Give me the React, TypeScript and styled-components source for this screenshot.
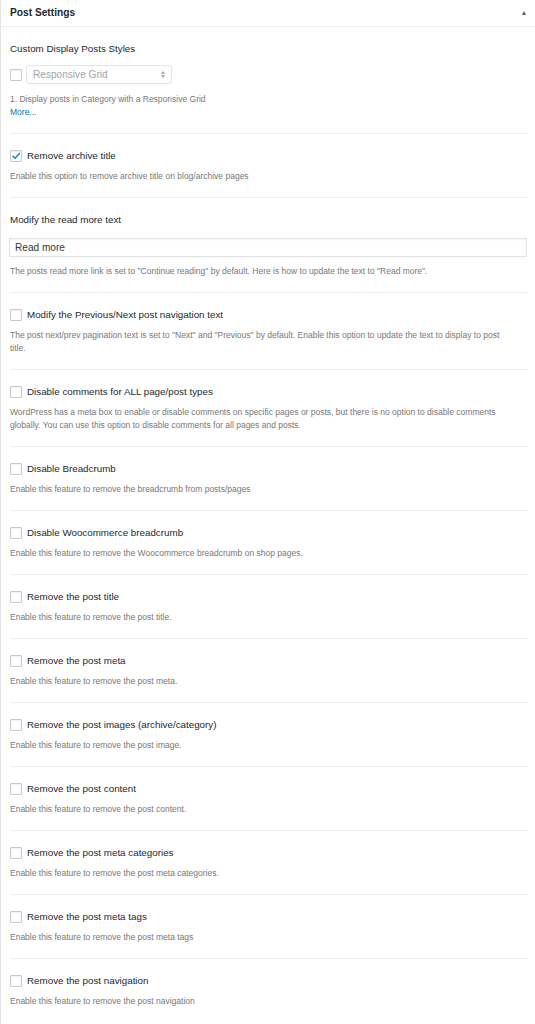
import { FC } from 'react';
import styled, { createGlobalStyle } from 'styled-components';

const GlobalStyle = createGlobalStyle`
  html, body {
    margin: 0;
    padding: 0;
    background: #fff;
  }
  body {
    font-family: "Liberation Sans", Arial, sans-serif;
    color: #23282d;
  }
`;

const Box = styled.div`
  border-left: 1px solid #e5e5e5;
  background: #fff;
  min-height: 1024px;
`;

const Header = styled.div`
  display: flex;
  align-items: center;
  justify-content: space-between;
  height: 26px;
  padding: 0 9px 0 9px;
  border-bottom: 1px solid #eee;
`;

const HeaderTitle = styled.h2`
  margin: 0;
  font-size: 10.2px;
  font-weight: 700;
  line-height: 26px;
  color: #23282d;
`;

const Toggle = styled.span`
  width: 0;
  height: 0;
  margin-top: -1px;
  border-left: 2.5px solid transparent;
  border-right: 2.5px solid transparent;
  border-bottom: 4px solid #555d66;
`;

const Section = styled.div`
  margin: 0 8px 0 9px;
  padding: 14px 0 14px;
  border-bottom: 1px solid #eee;

  &:last-child {
    border-bottom: none;
  }
`;

const Label = styled.label`
  display: flex;
  align-items: center;
  gap: 5px;
  font-size: 9.8px;
  line-height: 16px;
  color: #23282d;
`;

const Checkbox = styled.span`
  position: relative;
  flex: none;
  box-sizing: border-box;
  width: 12px;
  height: 12px;
  border: 1px solid #c8cbce;
  border-radius: 1px;
  background: #fff;
  box-shadow: inset 0 1px 1px rgba(0, 0, 0, 0.06);
`;

const Check = styled.svg`
  position: absolute;
  left: 0;
  top: 0;
  width: 10px;
  height: 10px;
`;

const Controls = styled.div`
  display: flex;
  align-items: center;
  gap: 4px;
  margin-top: 8px;
`;

const Select = styled.div`
  position: relative;
  box-sizing: border-box;
  width: 146px;
  height: 19px;
  padding: 0 0 0 6px;
  border: 1px solid #e2e4e7;
  border-radius: 3px;
  font-size: 10.1px;
  line-height: 17px;
  color: #a0a5aa;
  background: #fff;
`;

const Arrows = styled.span`
  position: absolute;
  right: 6px;
  top: 5px;
  display: flex;
  flex-direction: column;
  gap: 1px;

  &::before,
  &::after {
    content: '';
    width: 0;
    height: 0;
    border-left: 2px solid transparent;
    border-right: 2px solid transparent;
  }
  &::before {
    border-bottom: 3px solid #a0a5aa;
  }
  &::after {
    border-top: 3px solid #a0a5aa;
  }
`;

const TextInput = styled.div`
  box-sizing: border-box;
  height: 19px;
  margin: 10px 0 0 -1px;
  padding: 0 5px;
  border: 1px solid #dfe1e4;
  box-shadow: inset 0 1px 2px rgba(0, 0, 0, 0.04);
  font-size: 10.1px;
  line-height: 17px;
  color: #32373c;
`;

const Description = styled.p<{ $gap?: number }>`
  max-width: 500px;
  margin: ${({ $gap }) => $gap ?? 6}px 0 0;
  font-size: 8.5px;
  line-height: 13px;
  color: #777;
`;

const MoreLink = styled.a`
  display: block;
  font-size: 8.5px;
  line-height: 13px;
  color: #0073aa;
  text-decoration: none;
`;

interface OptionProps {
  readonly label: string;
  readonly description: string;
  readonly checked?: boolean;
}

const CheckMark: FC = () => (
  <Check viewBox="0 0 10 10">
    <path
      d="M2 5.2 L4.1 7.3 L8.3 2.4"
      fill="none"
      stroke="#1e8cbe"
      strokeWidth="1.6"
      strokeLinecap="round"
      strokeLinejoin="round"
    />
  </Check>
);

const Option: FC<OptionProps> = ({ label, description, checked }) => (
  <Section>
    <Label>
      <Checkbox>{checked && <CheckMark />}</Checkbox>
      {label}
    </Label>
    <Description>{description}</Description>
  </Section>
);

const options: OptionProps[] = [
  {
    label: 'Modify the Previous/Next post navigation text',
    description:
      'The post next/prev pagination text is set to "Next" and "Previous" by default. Enable this option to update the text to display to post title.',
  },
  {
    label: 'Disable comments for ALL page/post types',
    description:
      'WordPress has a meta box to enable or disable comments on specific pages or posts, but there is no option to disable comments globally. You can use this option to disable comments for all pages and posts.',
  },
  {
    label: 'Disable Breadcrumb',
    description: 'Enable this feature to remove the breadcrumb from posts/pages',
  },
  {
    label: 'Disable Woocommerce breadcrumb',
    description:
      'Enable this feature to remove the Woocommerce breadcrumb on shop pages.',
  },
  {
    label: 'Remove the post title',
    description: 'Enable this feature to remove the post title.',
  },
  {
    label: 'Remove the post meta',
    description: 'Enable this feature to remove the post meta.',
  },
  {
    label: 'Remove the post images (archive/category)',
    description: 'Enable this feature to remove the post image.',
  },
  {
    label: 'Remove the post content',
    description: 'Enable this feature to remove the post content.',
  },
  {
    label: 'Remove the post meta categories',
    description: 'Enable this feature to remove the post meta categories.',
  },
  {
    label: 'Remove the post meta tags',
    description: 'Enable this feature to remove the post meta tags',
  },
  {
    label: 'Remove the post navigation',
    description: 'Enable this feature to remove the post navigation',
  },
];

const App: FC = () => (
  <>
    <GlobalStyle />
    <Box>
      <Header>
        <HeaderTitle>Post Settings</HeaderTitle>
        <Toggle />
      </Header>

      <Section>
        <Label>Custom Display Posts Styles</Label>
        <Controls>
          <Checkbox />
          <Select>
            Responsive Grid
            <Arrows />
          </Select>
        </Controls>
        <Description $gap={9}>
          1. Display posts in Category with a Responsive Grid
        </Description>
        <MoreLink href="#">More...</MoreLink>
      </Section>

      <Option
        checked
        label="Remove archive title"
        description="Enable this option to remove archive title on blog/archive pages"
      />

      <Section>
        <Label>Modify the read more text</Label>
        <TextInput>Read more</TextInput>
        <Description $gap={8}>
          The posts read more link is set to "Continue reading" by default.
          Here is how to update the text to "Read more".
        </Description>
      </Section>

      {options.map((option) => (
        <Option key={option.label} {...option} />
      ))}
    </Box>
  </>
);

export default App;
